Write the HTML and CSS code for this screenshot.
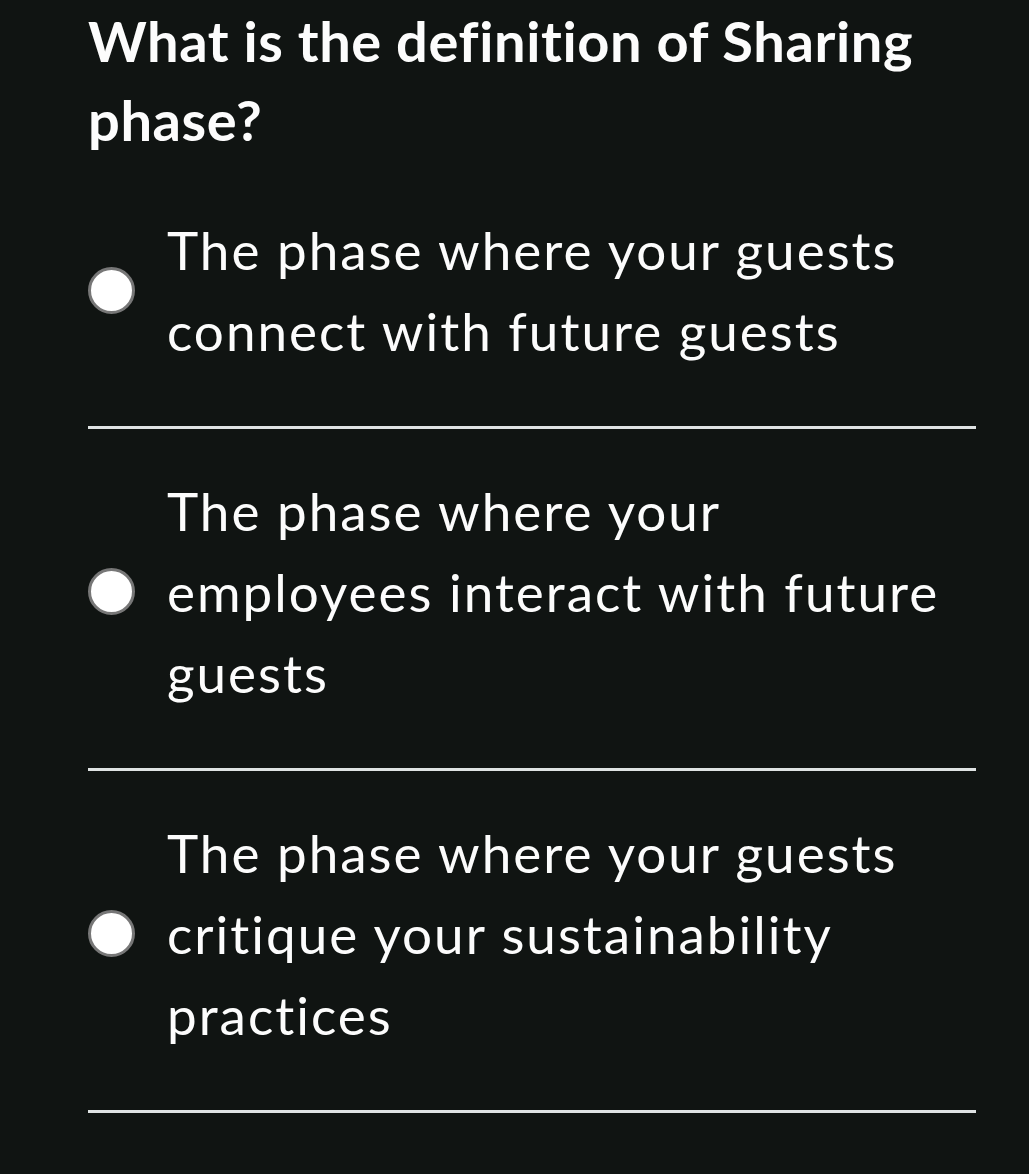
FILE: index.html
```html
<!DOCTYPE html>
<html lang="en">
<head>
    <meta charset="UTF-8">
    <meta name="viewport" content="width=device-width, initial-scale=1.0">
    <title>Sharing phase</title>
    <link rel="stylesheet" href="styles.css">
</head>
<body>
    <div class="quiz">
        <h1 class="question">What is the definition of Sharing phase?</h1>

        <!-- Cevaplar -->
        <label class="option">
            <input type="radio" name="answer">
            <span class="option-text">The phase where your guests connect with future guests</span>
        </label>
        <label class="option">
            <input type="radio" name="answer">
            <span class="option-text">The phase where your employees interact with future guests</span>
        </label>
        <label class="option">
            <input type="radio" name="answer">
            <span class="option-text">The phase where your guests critique your sustainability practices</span>
        </label>
    </div>
</body>
</html>
```

FILE: styles.css
```css
body {
    margin: 0;
    padding: 0;
    background-color: #101412;
    color: #fcfcfc;
    font-family: "Lato", "Open Sans", sans-serif;
}
.quiz {
    padding: 1px 53px 0 88px;
}
.question {
    margin: 0 0 9px 0;
    font-size: 56px;
    line-height: 79px;
    font-weight: 700;
    letter-spacing: 0.6px;
}
.option {
    display: flex;
    align-items: center;
    gap: 32px;
    padding: 41px 0 55px 0;
    border-bottom: 3px solid #dfe3e3;
    cursor: pointer;
}
.option input {
    appearance: none;
    -webkit-appearance: none;
    flex: none;
    width: 47px;
    height: 47px;
    margin: 0;
    border: 3px solid #777;
    border-radius: 50%;
    background: #fff;
}
.option-text {
    font-size: 53px;
    line-height: 81px;
    letter-spacing: 2px;
    font-variant-ligatures: none;
}
```
